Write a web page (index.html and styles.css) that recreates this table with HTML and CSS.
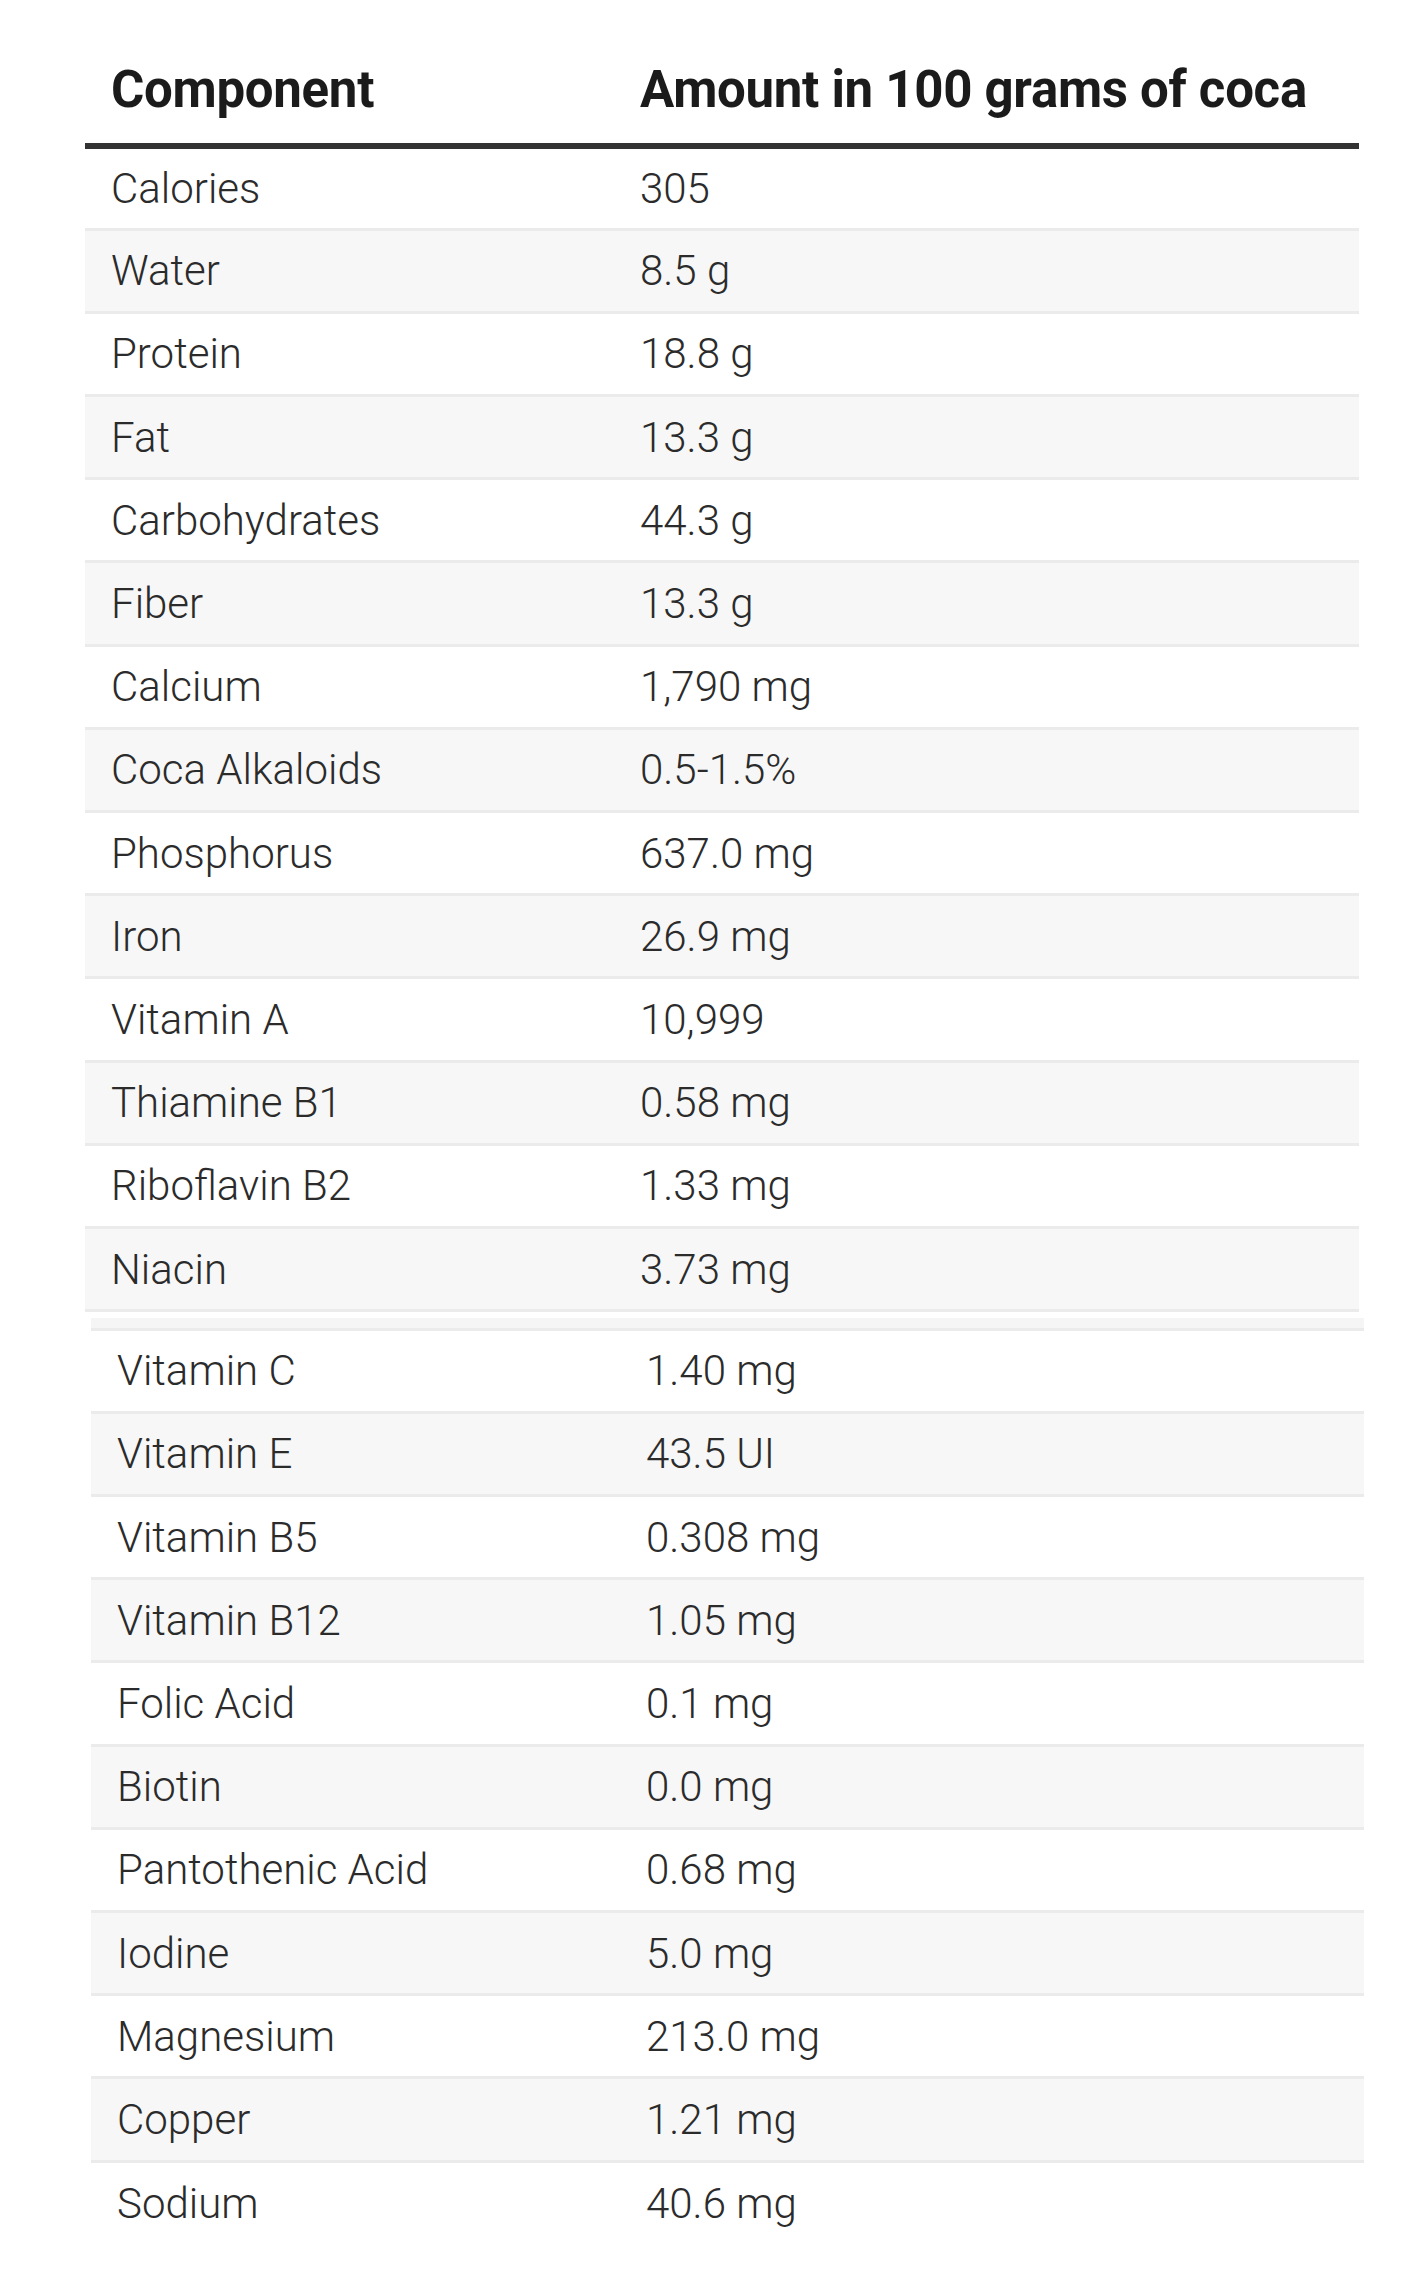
FILE: index.html
```html
<!DOCTYPE html>
<html>
<head>
<meta charset="utf-8">
<link rel="stylesheet" href="styles.css">
</head>
<body>
<div class="page">
  <table class="nutri first">
    <thead>
      <tr><th class="c1">Component</th><th>Amount in 100 grams of coca</th></tr>
    </thead>
    <tbody>
      <tr><td class="c1">Calories</td><td>305</td></tr>
      <tr><td class="c1">Water</td><td>8.5 g</td></tr>
      <tr><td class="c1">Protein</td><td>18.8 g</td></tr>
      <tr><td class="c1">Fat</td><td>13.3 g</td></tr>
      <tr><td class="c1">Carbohydrates</td><td>44.3 g</td></tr>
      <tr><td class="c1">Fiber</td><td>13.3 g</td></tr>
      <tr><td class="c1">Calcium</td><td>1,790 mg</td></tr>
      <tr><td class="c1">Coca Alkaloids</td><td>0.5-1.5%</td></tr>
      <tr><td class="c1">Phosphorus</td><td>637.0 mg</td></tr>
      <tr><td class="c1">Iron</td><td>26.9 mg</td></tr>
      <tr><td class="c1">Vitamin A</td><td>10,999</td></tr>
      <tr><td class="c1">Thiamine B1</td><td>0.58 mg</td></tr>
      <tr><td class="c1">Riboflavin B2</td><td>1.33 mg</td></tr>
      <tr><td class="c1">Niacin</td><td>3.73 mg</td></tr>
    </tbody>
  </table>
  <table class="nutri second">
    <thead>
      <tr class="band"><th class="c1"></th><th></th></tr>
    </thead>
    <tbody>
      <tr><td class="c1">Vitamin C</td><td>1.40 mg</td></tr>
      <tr><td class="c1">Vitamin E</td><td>43.5 UI</td></tr>
      <tr><td class="c1">Vitamin B5</td><td>0.308 mg</td></tr>
      <tr><td class="c1">Vitamin B12</td><td>1.05 mg</td></tr>
      <tr><td class="c1">Folic Acid</td><td>0.1 mg</td></tr>
      <tr><td class="c1">Biotin</td><td>0.0 mg</td></tr>
      <tr><td class="c1">Pantothenic Acid</td><td>0.68 mg</td></tr>
      <tr><td class="c1">Iodine</td><td>5.0 mg</td></tr>
      <tr><td class="c1">Magnesium</td><td>213.0 mg</td></tr>
      <tr><td class="c1">Copper</td><td>1.21 mg</td></tr>
      <tr><td class="c1">Sodium</td><td>40.6 mg</td></tr>
    </tbody>
  </table>
</div>
</body>
</html>
```
FILE: styles.css
```css
html, body {
  margin: 0;
  padding: 0;
  background: #ffffff;
}
body {
  font-family: Roboto, "Liberation Sans", sans-serif;
  color: #2b2b2b;
}
.page {
  display: flex;
  flex-direction: column;
  gap: 6px;
  padding-bottom: 20px;
}
.nutri {
  border-collapse: collapse;
  table-layout: fixed;
}
.first {
  margin-left: 85px;
  width: 1274px;
}
.second {
  margin-left: 91px;
  width: 1273px;
}
.nutri th {
  text-align: left;
  font-weight: 700;
  font-size: 51px;
  line-height: 61px;
  color: #1b1b1b;
  padding: 59px 0 23px 26px;
  border-bottom: 6px solid #333333;
  letter-spacing: -0.3px;
}
.nutri th, .nutri td {
  box-sizing: border-box;
}
.nutri th.c1, .nutri td.c1 {
  width: 529px;
}
.nutri td {
  font-size: 42px;
  line-height: 49px;
  height: 83.2px;
  padding: 0 0 0 26px;
  vertical-align: middle;
  border-bottom: 3px solid #ebebeb;
  font-weight: 300;
}
.nutri tbody tr:nth-child(even) td {
  background: #f7f7f7;
}
.second .band th {
  height: 11px;
  padding: 0;
  background: #f5f5f5;
  border-bottom: 3px solid #ebebeb;
}
.second tbody tr:last-child td {
  border-bottom: none;
}
```
